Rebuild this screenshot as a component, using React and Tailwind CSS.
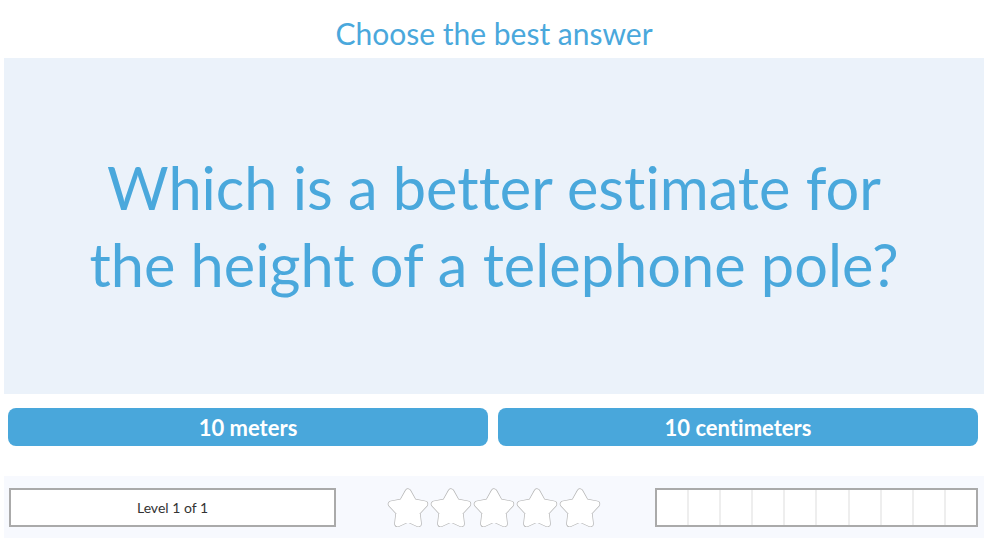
import React from "react";

function Star() {
  const pts = [];
  const cx = 21, cy = 22.5, R = 17.5, r = 9.4;
  for (let i = 0; i < 10; i++) {
    const a = (-90 + i * 36) * Math.PI / 180;
    const rr = i % 2 === 0 ? R : r;
    pts.push(`${(cx + rr * Math.cos(a)).toFixed(2)},${(cy + rr * Math.sin(a)).toFixed(2)}`);
  }
  const p = pts.join(" ");
  return (
    <svg width="42" height="40" viewBox="0 0 42 40" className="shrink-0">
      <polygon points={p} fill="#b5b5b5" stroke="#b5b5b5" strokeWidth="7" strokeLinejoin="round" />
      <polygon points={p} fill="#ffffff" stroke="#ffffff" strokeWidth="5.6" strokeLinejoin="round" />
    </svg>
  );
}

export default function App() {
  const font = { fontFamily: "Lato, 'Open Sans', sans-serif" };
  return (
    <div className="w-[988px] h-[550px] bg-white [font-variant-ligatures:none]" style={font}>
      <div className="h-[58px] flex items-center justify-center pt-[8px]">
        <h1 className="text-[30px] text-[#4aa8dc] leading-none">Choose the best answer</h1>
      </div>
      <div className="mx-[4px] h-[336px] bg-[#ebf2fa] flex items-center justify-center">
        <p className="text-[59.5px] leading-[77px] text-[#4aa8dc] text-center">
          Which is a better estimate for<br />the height of a telephone pole?
        </p>
      </div>
      <div className="flex gap-[10px] pl-[8px] pr-[10px] mt-[14px]">
        <button className="flex-1 h-[38px] rounded-[8px] bg-[#49a7db] text-white font-bold text-[22px]">10 meters</button>
        <button className="flex-1 h-[38px] rounded-[8px] bg-[#49a7db] text-white font-bold text-[22px]">10 centimeters</button>
      </div>
      <div className="mx-[4px] mt-[30px] h-[62px] bg-[#f7f9fe] flex items-center justify-between pl-[5px] pr-[6px]">
        <div className="w-[327px] h-[39px] border-2 border-[#aaaaaa] bg-white flex items-center justify-center text-[14px] text-[#333333]">
          Level 1 of 1
        </div>
        <div className="flex gap-[1px] -ml-[4px]">
          <Star /><Star /><Star /><Star /><Star />
        </div>
        <div className="w-[323px] h-[39px] border-2 border-[#aaaaaa] bg-white flex">
          {Array.from({ length: 10 }).map((_, i) => (
            <div key={i} className={"flex-1 " + (i < 9 ? "border-r-2 border-[#eeeeee]" : "")} />
          ))}
        </div>
      </div>
    </div>
  );
}
